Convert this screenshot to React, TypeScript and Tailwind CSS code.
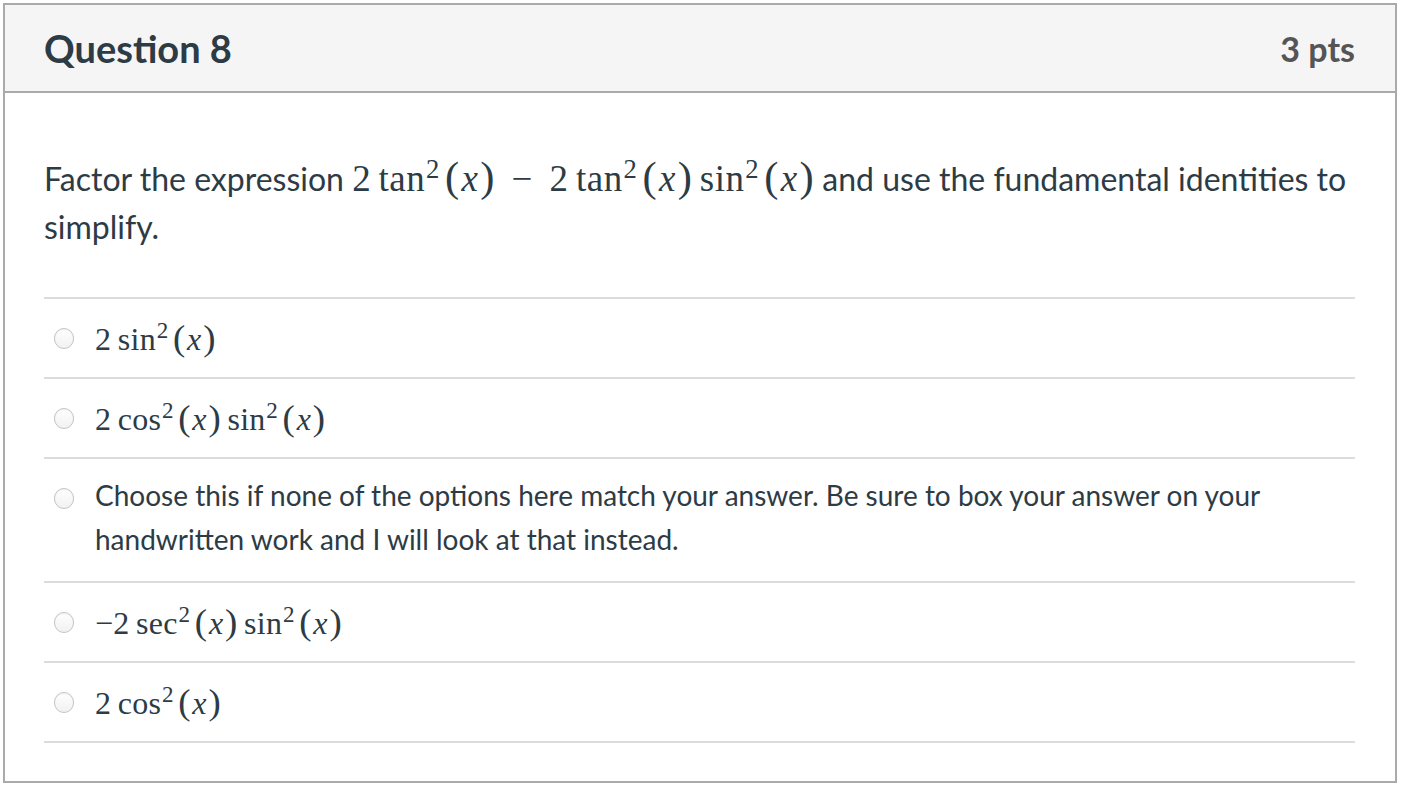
import React from "react";

const serif = "font-['Liberation_Serif','DejaVu_Serif',serif]";

function Fn({ name }: { name: string }) {
  return (
    <>
      <span className="ml-[0.2em]">{name}</span>
      <sup className="ml-[0.03em] text-[0.72em]">2</sup>
      <span className="ml-[0.12em] text-[1.15em] leading-none">(</span>
      <i className="px-[0.05em]">x</i>
      <span className="text-[1.15em] leading-none">)</span>
    </>
  );
}

function Radio() {
  return (
    <div className="h-[44px] w-[20px] shrink-0 flex items-center ml-[10px] mr-[21px]">
      <span className="block w-[21px] h-[21px] rounded-full border border-[#c4c4c4] bg-gradient-to-b from-white to-[#f1f1f1] shadow-[inset_0_1px_1px_rgba(0,0,0,0.06)]" />
    </div>
  );
}

function Answer({ children }: { children: React.ReactNode }) {
  return (
    <div className="border-t-2 border-[#dcdcdc] py-[17px] flex items-start">
      <Radio />
      {children}
    </div>
  );
}

function OptMath({ children }: { children: React.ReactNode }) {
  return (
    <div className="h-[44px] flex items-center">
      <span className={`${serif} text-[32px] leading-none tracking-[0.3px]`}>{children}</span>
    </div>
  );
}

export default function App() {
  return (
    <div className="p-[3px] bg-white min-h-screen font-['Lato','Open_Sans',sans-serif] text-[#2d3b45]">
      <div className="w-[1394px] border-2 border-[#aaaaaa]">
        <div className="h-[88px] bg-[#f5f5f5] border-b-2 border-[#aaaaaa] flex items-center justify-between pl-[39px] pr-[40px]">
          <h2 className="text-[38px] font-bold">Question 8</h2>
          <div className="text-[34px] font-bold text-[#555555]">3 pts</div>
        </div>
        <div className="pl-[39px] pr-[40px] pt-[62px] pb-[38px]">
          <p className="text-[32px] leading-[48px] mb-[46px]">
            Factor the expression{" "}
            <span className={`${serif} text-[37px] tracking-[0.5px]`}>
              2<Fn name="tan" />
              <span className="mx-[0.45em]">−</span>2<Fn name="tan" />
              <Fn name="sin" />
            </span>{" "}
            and use the fundamental identities to simplify.
          </p>
          <div className="border-b-2 border-[#dcdcdc]">
            <Answer>
              <OptMath>
                2<Fn name="sin" />
              </OptMath>
            </Answer>
            <Answer>
              <OptMath>
                2<Fn name="cos" />
                <Fn name="sin" />
              </OptMath>
            </Answer>
            <Answer>
              <div className="text-[28px] leading-[44px] -mt-[3px] mb-[3px]">
                Choose this if none of the options here match your answer. Be sure to box your answer on your handwritten work and I will look at that instead.
              </div>
            </Answer>
            <Answer>
              <OptMath>
                −2<Fn name="sec" />
                <Fn name="sin" />
              </OptMath>
            </Answer>
            <Answer>
              <OptMath>
                2<Fn name="cos" />
              </OptMath>
            </Answer>
          </div>
        </div>
      </div>
    </div>
  );
}
